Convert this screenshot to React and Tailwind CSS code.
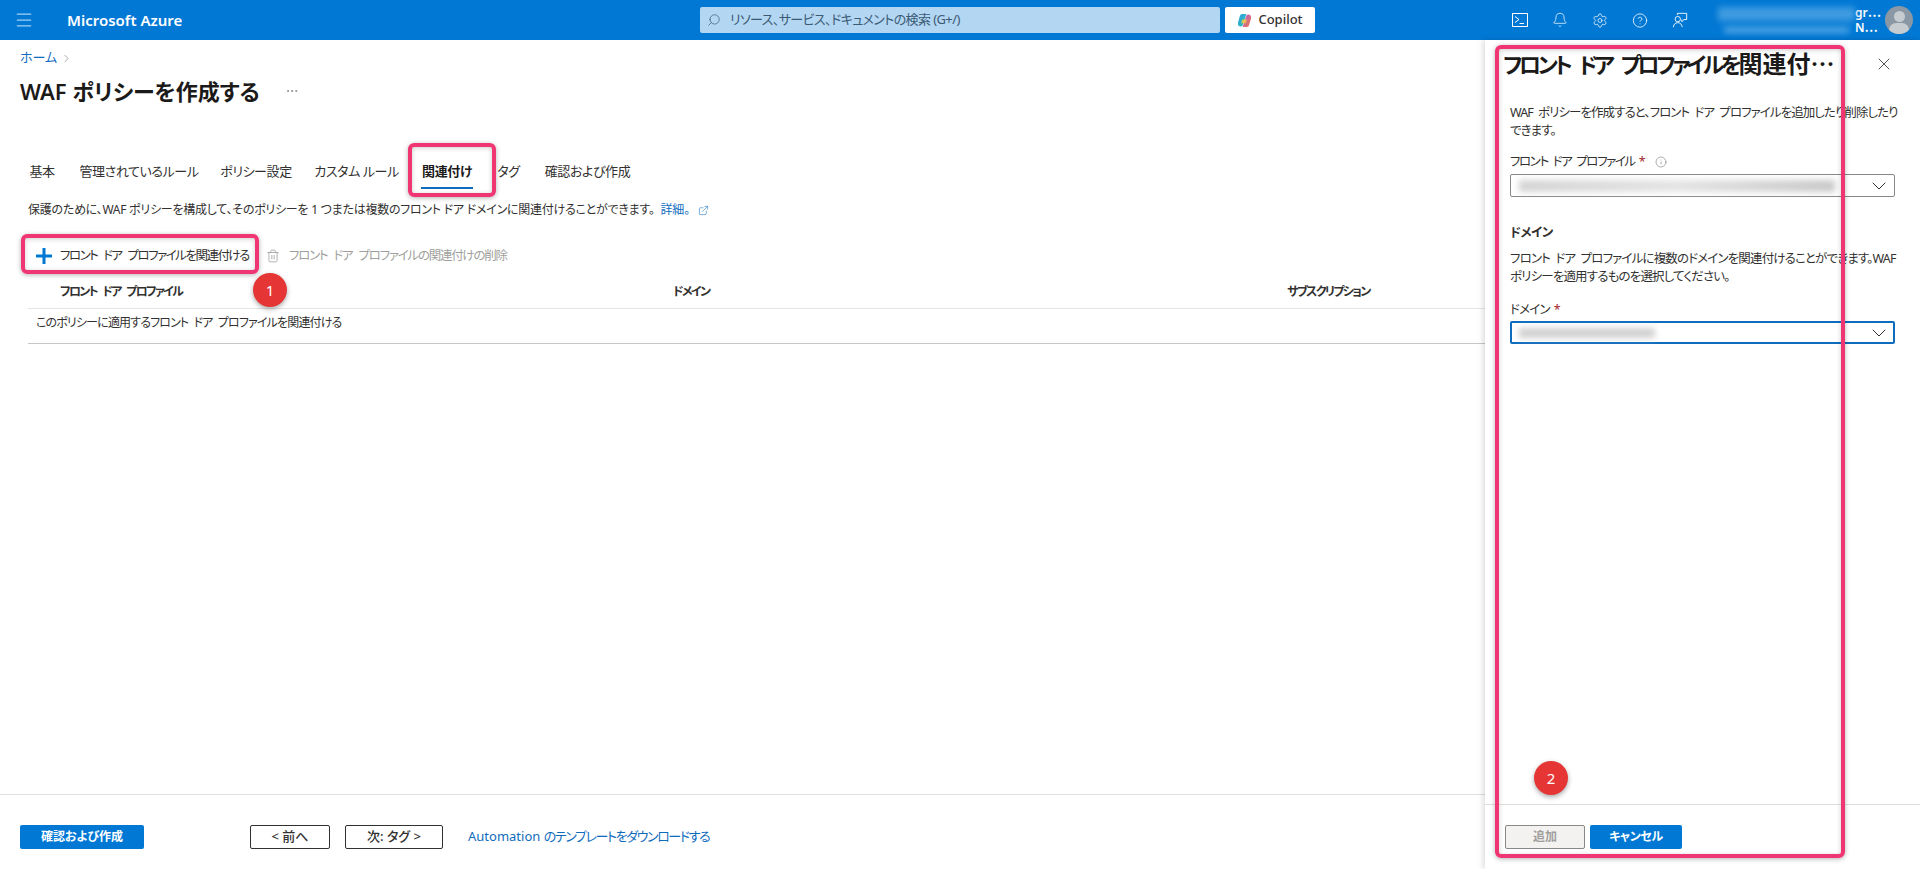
import React from "react";
import { Bell, Settings, CircleHelp, ChevronDown, ChevronRight, X, Trash2, Info, Search, Menu, ExternalLink, Ellipsis } from "lucide-react";

const Terminal = () => (
  <svg width="16" height="16" viewBox="0 0 16 16" fill="none" stroke="currentColor" strokeWidth="1">
    <rect x="0.5" y="1.5" width="15" height="13" />
    <path d="M3 4.5 L7 7.5 L3 10.5 M7.5 11.5 H12" />
  </svg>
);
const Feedback = () => (
  <svg width="18" height="18" viewBox="0 0 18 18" fill="none" stroke="currentColor" strokeWidth="1">
    <circle cx="6.5" cy="8" r="3" />
    <path d="M1.5 17 C2 13.5 4 12 6.5 12 C9 12 11 13.5 11.5 17" />
    <path d="M6 3.5 V1.5 H16.5 V8.5 H13.5 L11 11 V8.5" />
  </svg>
);
const CopilotLogo = () => (
  <svg width="15" height="15" viewBox="0 0 16 16">
    <defs>
      <linearGradient id="cpa" x1="0" y1="0" x2="1" y2="1">
        <stop offset="0" stopColor="#2e9be6" />
        <stop offset="1" stopColor="#2dc6a8" />
      </linearGradient>
      <linearGradient id="cpb" x1="0" y1="0" x2="1" y2="1">
        <stop offset="0" stopColor="#b05fe0" />
        <stop offset="1" stopColor="#f0793c" />
      </linearGradient>
    </defs>
    <path d="M5.5 1 H10 L6.5 12 Q6 14.5 4 14.5 Q0.5 14.5 1 10.5 L3 3.5 Q3.5 1 5.5 1 Z" fill="url(#cpa)" />
    <path d="M10.5 15 H6 L9.5 4 Q10 1.5 12 1.5 Q15.5 1.5 15 5.5 L13 12.5 Q12.5 15 10.5 15 Z" fill="url(#cpb)" />
    <path d="M5.5 7 H10.5 L9.5 11 H4.5 Z" fill="#f5c542" opacity="0.85" />
  </svg>
);

const Req = () => <span className="text-[#a4262c] ml-1">*</span>;

function Tab({ children, active, w }) {
  return (
    <div className={`flex flex-col items-center h-[34px] ${w}`}>
      <span className={`h-[22px] leading-[22px] whitespace-nowrap ${active ? "font-bold text-[#1b1a19]" : "text-[#323130]"}`}>{children}</span>
      <span className={`mt-[5px] h-[2px] w-full ${active ? "bg-[#0f6cbd]" : ""}`} />
    </div>
  );
}

export default function App() {
  return (
    <div className="relative h-[869px] w-[1920px] overflow-hidden bg-white text-[13px] text-[#323130] font-['Noto_Sans','Noto_Sans_CJK_JP',sans-serif] [font-feature-settings:'palt']">
      <header className="flex h-[40px] items-center bg-[#0078d4] text-white">
        <Menu size={20} strokeWidth={1.5} className="ml-[14px] text-[#a5d0f1]" />
        <span className="ml-[33px] w-[601px] text-[15px] font-semibold">Microsoft Azure</span>
        <div className="ml-[32px] flex h-[26px] w-[520px] items-center rounded-[2px] bg-[#b3d6f2] pl-[7px] text-[13px] text-[#3b5a75]">
          <Search size={14} strokeWidth={1.2} className="-scale-x-100" />
          <span className="ml-[9px] tracking-[-0.6px]">リソース、サービス、ドキュメントの検索 (G+/)</span>
        </div>
        <button className="ml-[5px] flex h-[26px] w-[90px] items-center justify-center gap-[6px] rounded-[2px] bg-white text-[13px] font-medium text-[#323130]">
          <CopilotLogo />
          Copilot
        </button>
        <div className="ml-[197px] flex w-[16px] justify-center"><Terminal /></div>
        <div className="ml-[24px] flex w-[16px] justify-center"><Bell size={18} strokeWidth={1.1} /></div>
        <div className="ml-[24px] flex w-[16px] justify-center"><Settings size={19} strokeWidth={1.1} /></div>
        <div className="ml-[24px] flex w-[16px] justify-center"><CircleHelp size={19} strokeWidth={1.2} /></div>
        <div className="ml-[24px] flex w-[16px] justify-center"><Feedback /></div>
        <div className="ml-[30px] flex h-[30px] w-[137px] flex-col justify-center gap-[6px] blur-[3px]">
          <div className="h-[14px] w-full bg-[#3f9be0]" />
          <div className="ml-[6px] h-[6px] w-[125px] bg-[#54a7e5]" />
        </div>
        <div className="flex w-[27px] flex-col text-[12px] font-semibold leading-[15px]">
          <span>gr⋯</span>
          <span>N⋯</span>
        </div>
        <div className="relative ml-[3px] h-[28px] w-[28px] overflow-hidden rounded-full bg-[#8a98a5]">
          <div className="mx-auto mt-[5px] h-[11px] w-[11px] rounded-full bg-[#c7ccd1]" />
          <div className="mx-auto mt-[1px] h-[14px] w-[20px] rounded-full bg-[#c7ccd1]" />
        </div>
      </header>

      <div className="flex h-[829px]">
        <main className="flex w-[1485px] flex-col">
          <div className="flex h-[16px] items-center pl-[20px] mt-[10px] text-[#0f6cbd]">
            ホーム
            <ChevronRight size={13} strokeWidth={1} className="ml-[3px] text-[#605e5c]" />
          </div>
          <div className="mt-[7px] flex h-[36px] items-center pl-[20px]">
            <h1 className="text-[22px] font-semibold text-[#1b1a19]">WAF ポリシーを作成する</h1>
            <Ellipsis size={14} strokeWidth={1} className="ml-[25px] text-[#605e5c]" />
          </div>
          <nav className="mt-[51px] flex pl-[28px] tracking-[-0.4px]">
            <Tab w="w-[28px]">基本</Tab>
            <Tab w="w-[118px] ml-[24px]">管理されているルール</Tab>
            <Tab w="w-[70px] ml-[23px]">ポリシー設定</Tab>
            <Tab w="w-[81px] ml-[25px]">カスタム ルール</Tab>
            <Tab w="w-[52px] ml-[24px]" active>関連付け</Tab>
            <Tab w="w-[19px] ml-[26px]">タグ</Tab>
            <Tab w="w-[89px] ml-[25px]">確認および作成</Tab>
          </nav>
          <p className="mt-[7px] flex h-[18px] items-center pl-[28px] text-[12px] leading-[18px] whitespace-nowrap tracking-[-0.25px]">
            保護のために、WAF ポリシーを構成して、そのポリシーを 1 つまたは複数のフロント ドア ドメインに関連付けることができます。
            <span className="ml-[6px] text-[#0f6cbd]">詳細。</span>
            <ExternalLink size={11} strokeWidth={1.2} className="ml-[8px] text-[#0f6cbd]" />
          </p>
          <div className="mt-[24px] flex h-[26px] items-center pl-[36px] text-[12.5px]">
            <svg width="16" height="16" viewBox="0 0 16 16" className="text-[#0078d4]">
              <path d="M6.5 0 H9.5 V6.5 H16 V9.5 H9.5 V16 H6.5 V9.5 H0 V6.5 H6.5 Z" fill="currentColor" />
            </svg>
            <span className="ml-[8px] w-[189px] whitespace-nowrap tracking-[-1.5px] [word-spacing:4px]">フロント ドア プロファイルを関連付ける</span>
            <Trash2 size={14} strokeWidth={1.4} className="ml-[17px] text-[#a19f9d]" />
            <span className="ml-[9px] whitespace-nowrap text-[#a19f9d] tracking-[-1.25px] [word-spacing:4px]">フロント ドア プロファイルの関連付けの削除</span>
          </div>
          <div className="ml-[28px] mt-[11px] grid h-[29px] grid-cols-[645px_614px_1fr] items-center border-b border-[#e5e5e5] pb-[5px] text-[12px] font-semibold text-[#323130] tracking-[-1.7px] [word-spacing:4px]">
            <span className="pl-[32px]">フロント ドア プロファイル</span>
            <span>ドメイン</span>
            <span>サブスクリプション</span>
          </div>
          <div className="ml-[28px] flex h-[35px] items-center border-b border-[#c8c6c4] pb-[6px] pl-[8px] text-[12px] tracking-[-0.85px] [word-spacing:3px]">
            このポリシーに適用するフロント ドア プロファイルを関連付ける
          </div>
          <div className="flex-1" />
          <footer className="flex h-[75px] items-start border-t border-[#e1dfdd] pt-[30px]">
            <button className="ml-[20px] h-[24px] w-[124px] rounded-[2px] bg-[#0078d4] text-[12px] font-bold text-white">確認および作成</button>
            <button className="ml-[106px] h-[24px] w-[80px] rounded-[2px] border border-[#323130] text-[13px] font-medium text-[#323130]">&lt; 前へ</button>
            <button className="ml-[15px] h-[24px] w-[98px] rounded-[2px] border border-[#323130] text-[13px] font-medium text-[#323130]">次: タグ &gt;</button>
            <a className="ml-[25px] flex h-[24px] items-center whitespace-pre text-[13px] text-[#0f6cbd]">Automation <span className="tracking-[-1.4px]">のテンプレートをダウンロードする</span></a>
          </footer>
        </main>

        <aside className="z-10 flex w-[435px] flex-col bg-white shadow-[-2px_0_6px_rgba(0,0,0,0.14)]">
          <div className="flex h-[46px] items-center pl-[18px] mt-[1px]">
            <h2 className="w-[342px] text-[24px] font-semibold text-[#1b1a19] whitespace-nowrap"><span className="text-[22px] tracking-[-3.5px] [word-spacing:7px]">フロント ドア プロファイルを</span>関連付⋯</h2>
            <X size={20} strokeWidth={1} className="ml-[29px] text-[#323130]" />
          </div>
          <div className="flex flex-1 flex-col px-[25px] pt-[17px] text-[12.5px]">
            <p className="leading-[18px] whitespace-nowrap tracking-[-0.95px] [word-spacing:3px]">WAF ポリシーを作成すると、フロント ドア プロファイルを追加したり削除したり<br />できます。</p>
            <div className="mt-[13px] flex h-[18px] items-center [word-spacing:3px]">
              <span className="tracking-[-1.4px]">フロント ドア プロファイル</span><Req />
              <Info size={12} strokeWidth={1} className="ml-[9px] text-[#605e5c]" />
            </div>
            <div className="mt-[3px] flex h-[23px] items-center rounded-[2px] border border-[#8a8886] pl-[8px] pr-[3px]">
              <div className="h-[12px] w-[316px] bg-linear-to-r from-[#d4d4d4] via-[#e4e4e4] to-[#c8c8c8] blur-[3px]" />
              <ChevronDown size={24} strokeWidth={1} className="ml-auto text-[#323130]" />
            </div>
            <h3 className="mt-[27px] h-[18px] font-bold leading-[18px] text-[#323130] tracking-[-0.5px]">ドメイン</h3>
            <p className="mt-[8px] leading-[18px] whitespace-nowrap tracking-[-0.85px] [word-spacing:3px]">フロント ドア プロファイルに複数のドメインを関連付けることができます。WAF<br />ポリシーを適用するものを選択してください。</p>
            <div className="mt-[15px] flex h-[18px] items-center tracking-[-0.8px]">ドメイン<Req /></div>
            <div className="mt-[2px] flex h-[23px] items-center rounded-[2px] border-2 border-[#0f6cbd] pl-[7px] pr-[2px]">
              <div className="h-[10px] w-[136px] bg-[#d0d0d0] blur-[3px]" />
              <ChevronDown size={24} strokeWidth={1} className="ml-auto text-[#323130]" />
            </div>
          </div>
          <div className="flex h-[65px] items-start gap-[5px] border-t border-[#e1dfdd] pl-[20px] pt-[20px]">
            <button className="h-[24px] w-[80px] rounded-[2px] border border-[#8a8886] bg-[#f3f2f1] text-[12px] font-bold text-[#a19f9d]">追加</button>
            <button className="h-[24px] w-[92px] rounded-[2px] bg-[#0078d4] text-[12px] font-bold text-white tracking-[-0.4px]">キャンセル</button>
          </div>
        </aside>
      </div>

      {/* annotations over the page */}
      <div className="absolute left-[408px] top-[143px] h-[54px] w-[88px] rounded-[6px] border-[4px] border-[#ef3673] shadow-[0_1px_5px_rgba(0,0,0,0.3),inset_0_1px_5px_rgba(0,0,0,0.2)]" />
      <div className="absolute left-[21px] top-[234px] h-[40px] w-[238px] rounded-[6px] border-[4px] border-[#ef3673] shadow-[0_1px_5px_rgba(0,0,0,0.3),inset_0_1px_5px_rgba(0,0,0,0.2)]" />
      <div className="absolute left-[1495px] top-[45px] h-[813px] w-[350px] z-20 rounded-[6px] border-[4px] border-[#ef3673] shadow-[0_1px_5px_rgba(0,0,0,0.3),inset_0_1px_5px_rgba(0,0,0,0.2)]" />
      <div className="absolute left-[253px] top-[273px] flex h-[34px] w-[34px] items-center justify-center rounded-full bg-[#e53535] text-[15px] text-white shadow-[0_2px_5px_rgba(0,0,0,0.35)]">1</div>
      <div className="absolute left-[1534px] top-[761px] z-20 flex h-[34px] w-[34px] items-center justify-center rounded-full bg-[#e53535] text-[15px] text-white shadow-[0_2px_5px_rgba(0,0,0,0.35)]">2</div>
    </div>
  );
}
